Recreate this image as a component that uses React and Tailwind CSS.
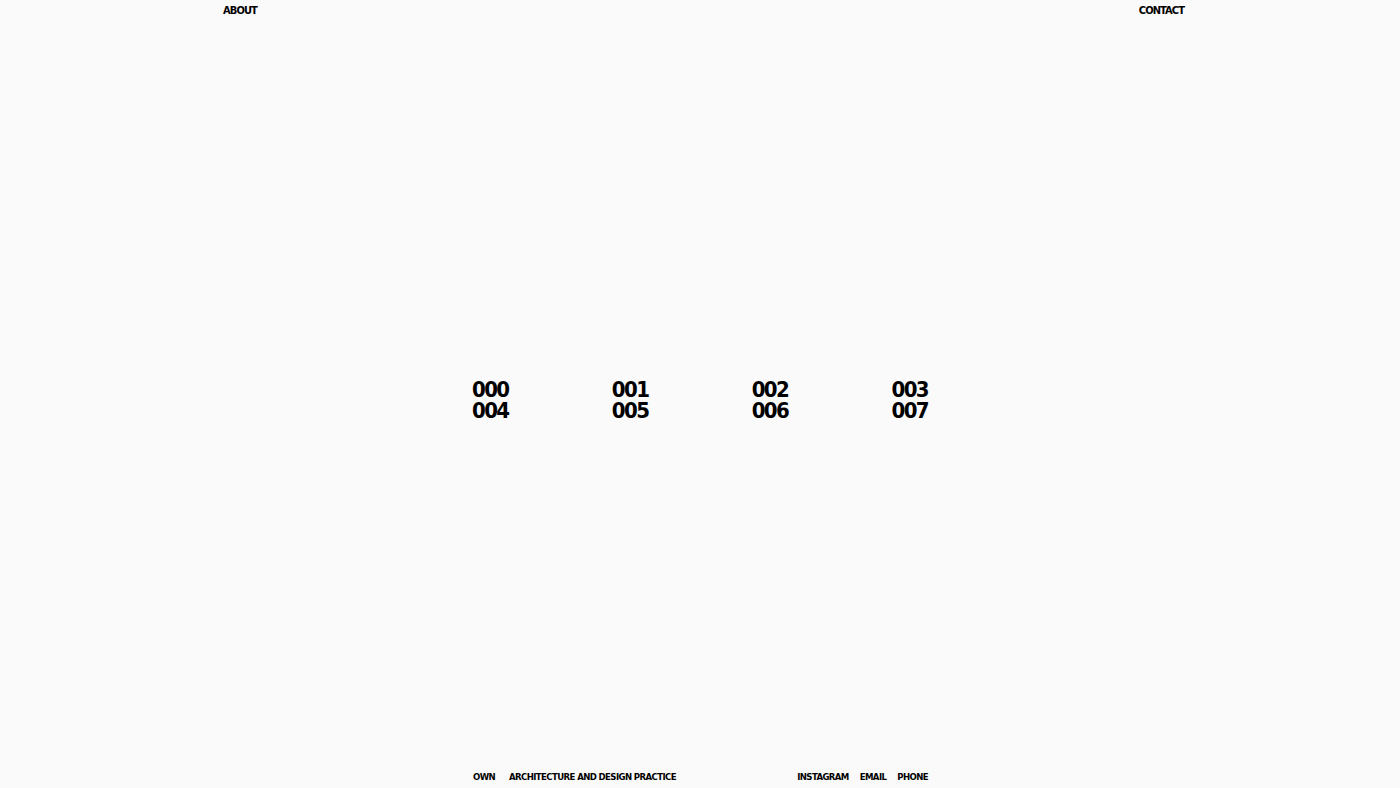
import React from 'react';

const font = { fontFamily: '"DejaVu Sans Condensed", "DejaVu Sans", sans-serif' };

const columns = [
  ['000', '004'],
  ['001', '005'],
  ['002', '006'],
  ['003', '007'],
];

export default function App() {
  return (
    <div className="h-[788px] w-full bg-[#fafafa] text-black flex flex-col font-bold font-stretch-condensed" style={font}>
      <header className="flex justify-between ml-[223px] mr-[216px] pt-[4px] text-[11px] leading-[14px] tracking-[-0.9px]">
        <a href="#">ABOUT</a>
        <a href="#">CONTACT</a>
      </header>

      <main className="flex-1 flex items-center justify-center">
        <div className="w-[456px] flex justify-between text-[22px] leading-[21px] tracking-[-1.6px] mt-[12px]">
          {columns.map((col, i) => (
            <div key={i} className="flex flex-col">
              {col.map((n) => (
                <a key={n} href="#">{n}</a>
              ))}
            </div>
          ))}
        </div>
      </main>

      <footer className="w-[456px] mx-auto flex justify-between pb-[4px] text-[9.5px] leading-[14px] tracking-[-0.6px]">
        <div className="flex gap-[14px] pl-[1px]">
          <span>OWN</span>
          <span>ARCHITECTURE AND DESIGN PRACTICE</span>
        </div>
        <div className="flex gap-[11px]">
          <a href="#">INSTAGRAM</a>
          <a href="#">EMAIL</a>
          <a href="#">PHONE</a>
        </div>
      </footer>
    </div>
  );
}
